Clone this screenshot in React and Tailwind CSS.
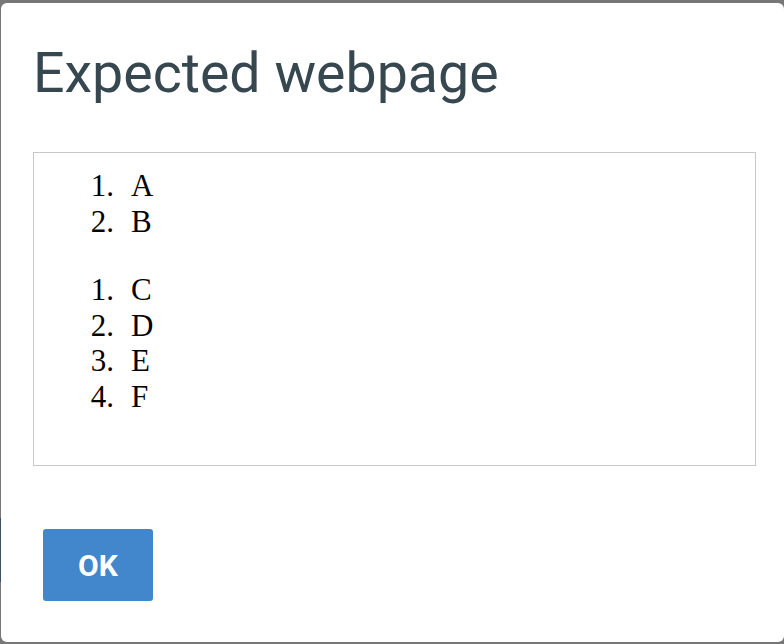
import React from 'react';

export default function App() {
    const lists = [
        ['A', 'B'],
        ['C', 'D', 'E', 'F'],
    ];

    return (
        <div className="w-[784px] h-[644px] bg-[#777777] flex overflow-hidden">
            {/* sliver of the page behind the dialog */}
            <div className="w-px flex flex-col">
                <div className="h-[518px]"></div>
                <div className="h-[64px] bg-[#3b4f66]"></div>
            </div>

            <div className="flex-1 pt-[3px] pb-[2px]">
                <div className="h-full bg-white rounded-[6px] pl-[32px] pr-[28px] flex flex-col">
                    <h1 className="mt-[38px] text-[55.5px] leading-[66px] text-[#37474f] font-['Roboto',sans-serif] font-normal">
                        Expected webpage
                    </h1>

                    <div className="mt-[45px] h-[314px] border border-[#c8c8c8] pt-[15px] font-['Liberation_Serif',serif] text-[31px] leading-[35.5px] text-black">
                        {lists.map((items, li) => (
                            <ol key={li} className={li > 0 ? 'mt-[33px]' : ''}>
                                {items.map((item, i) => (
                                    <li key={item} className="flex">
                                        <span className="w-[80px] text-right">{i + 1}.</span>
                                        <span className="ml-[17px]">{item}</span>
                                    </li>
                                ))}
                            </ol>
                        ))}
                    </div>

                    <div className="mt-[63px] ml-[10px]">
                        <button className="w-[110px] h-[72px] rounded-[3px] bg-[#4286cc] text-white font-['Roboto',sans-serif] font-bold text-[30px]">
                            OK
                        </button>
                    </div>
                </div>
            </div>
        </div>
    );
}
